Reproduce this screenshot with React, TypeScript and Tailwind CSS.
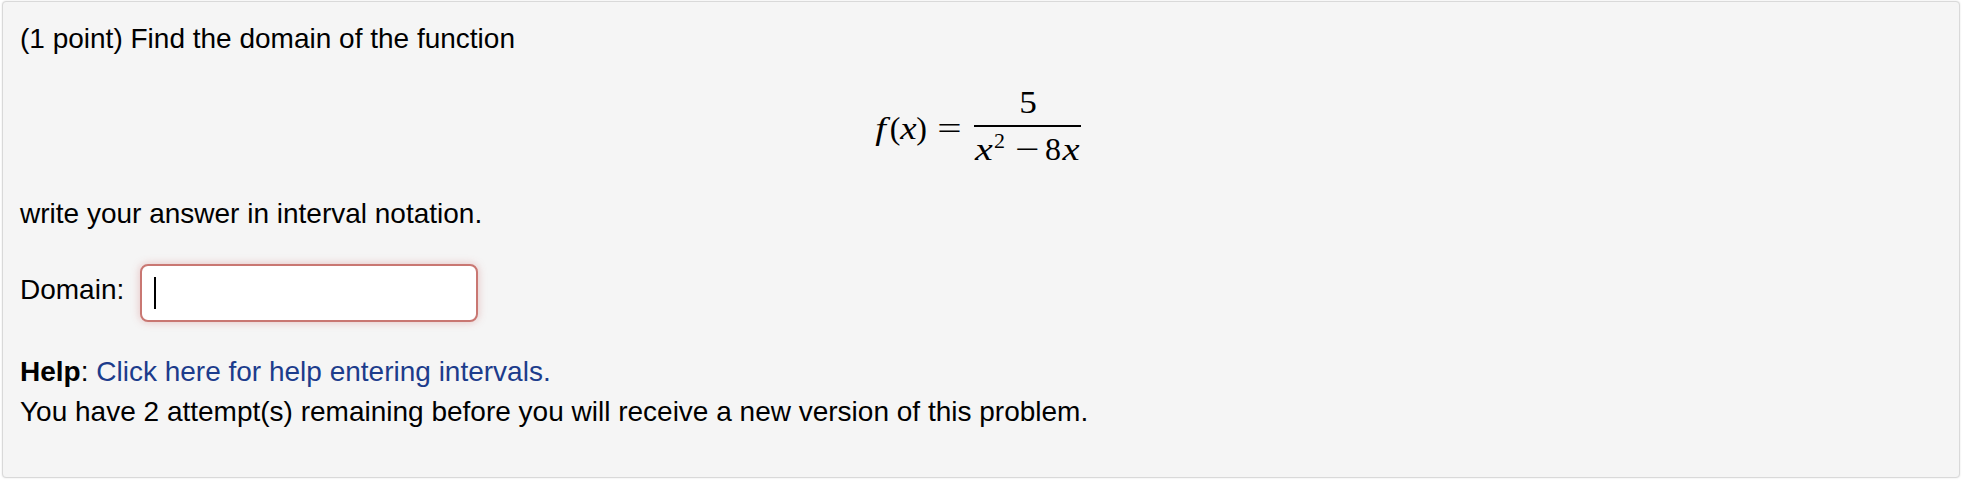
import React from "react";

export default function App() {
  return (
    <div className="w-[1962px] h-[480px] bg-white pt-[1px] px-[2px]">
      <div
        className="h-[477px] rounded-[4px] border border-[#d9d9d9] bg-[#f5f5f5] shadow-[0_0_2px_rgba(0,0,0,0.12)] pt-[17px] pl-[17px] pr-[17px] text-[28px] leading-[40px] text-black"
        style={{ fontFamily: '"Liberation Sans", Arial, Helvetica, sans-serif' }}
      >
        <div>(1 point) Find the domain of the function</div>

        <div className="h-[135px] flex justify-center items-start pt-[28px] pr-[10px]">
          <div
            className="flex items-center text-[32px]"
            style={{ fontFamily: '"Liberation Serif", "Times New Roman", serif' }}
          >
            <span className="flex items-baseline leading-[31px] translate-y-[1.5px]">
              <i className="inline-block w-[18px] pl-[5px] scale-x-[1.2]">f</i>
              <span className="inline-block w-[12px] text-center">(</span>
              <i className="inline-block w-[15px] text-center scale-x-[1.15]">x</i>
              <span className="inline-block w-[11px] text-center">)</span>
            </span>
            <span className="inline-block ml-[11px] w-[23px] text-center leading-[31px] translate-y-[1.5px] scale-x-[1.35]">
              =
            </span>
            <div className="ml-[13px] flex flex-col items-center w-[107px]">
              <div className="leading-[31px] h-[31px] scale-x-[1.1]">5</div>
              <div className="mt-[7px] mb-[7px] h-[2px] w-[107px] bg-black" />
              <div className="leading-[31px] h-[31px] w-[107px] flex items-baseline">
                <i className="inline-block w-[20px] text-center scale-x-[1.25]">x</i>
                <span className="inline-block w-[13px] text-[22px] leading-[22px] -translate-y-[12px]">2</span>
                <span className="inline-block w-[6px]" />
                <span className="inline-block w-[28px] text-center scale-x-[1.35]">−</span>
                <span className="inline-block w-[4px]" />
                <span className="inline-block w-[16px] text-center">8</span>
                <i className="inline-block w-[20px] text-center scale-x-[1.2]">x</i>
              </div>
            </div>
          </div>
        </div>

        <div>write your answer in interval notation.</div>

        <div className="flex items-start pt-[30px]">
          <span className="mt-[6px]">Domain:</span>
          <div className="ml-[16px] w-[338px] h-[58px] rounded-[8px] border-2 border-[#c97772] bg-white shadow-[0_0_8px_rgba(200,90,90,0.35)] flex items-center pl-[12px]">
            <span className="w-[2px] h-[32px] bg-black" />
          </div>
        </div>

        <div className="mt-[30px]">
          <b>Help</b>: <span className="text-[#1c3c8c]">Click here for help entering intervals.</span>
        </div>
        <div>You have 2 attempt(s) remaining before you will receive a new version of this problem.</div>
      </div>
    </div>
  );
}
